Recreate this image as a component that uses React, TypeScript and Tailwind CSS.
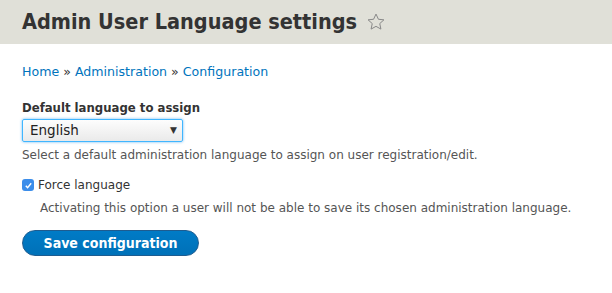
export default function App() {
  const font = { fontFamily: '"DejaVu Sans", "Liberation Sans", sans-serif' };
  const bold = { fontFamily: '"DejaVu Sans Condensed", "DejaVu Sans", sans-serif', fontStretch: "condensed" };
  return (
    <div className="w-[612px] h-[293px] bg-white text-[#333]" style={font}>
      <div className="h-[44px] bg-[#e0e0d8] flex items-center px-[22px] gap-[9px]">
        <h1 className="text-[21.5px] font-bold text-[#333] leading-none" style={bold}>
          Admin User Language settings
        </h1>
        <svg width="20" height="20" viewBox="0 0 24 24" fill="none" stroke="#888" strokeWidth="1.2">
          <path d="M12 2.5l2.9 6.2 6.6.7-5 4.5 1.4 6.6L12 17.2l-5.9 3.3 1.4-6.6-5-4.5 6.6-.7z" strokeLinejoin="round" />
        </svg>
      </div>
      <div className="px-[22px]">
        <nav className="mt-[20px] text-[12.6px] text-[#0074bd] leading-[16px]">
          Home <span className="text-[#333]">»</span> Administration <span className="text-[#333]">»</span> Configuration
        </nav>
        <div className="mt-[20px]">
          <label className="block text-[13px] font-bold leading-[16px]" style={bold}>
            Default language to assign
          </label>
          <div className="mt-[3px] w-[161px] h-[23px] border border-[#40b6ff] shadow-[0_0_3px_#6fb8f0] rounded-[2px] bg-gradient-to-b from-[#fdfdfd] to-[#eaeaea] flex items-center justify-between pl-[7px] pr-[5px]">
            <span className="text-[13.5px] text-[#222]">English</span>
            <span className="text-[9px] text-[#333]">▼</span>
          </div>
          <p className="mt-[6px] text-[12px] text-[#555] leading-[15px]">
            Select a default administration language to assign on user registration/edit.
          </p>
        </div>
        <div className="mt-[14px]">
          <div className="flex items-center gap-[4px]">
            <span className="w-[12px] h-[12px] rounded-[3px] bg-[#3b8dea] flex items-center justify-center">
              <svg width="9" height="9" viewBox="0 0 10 10" fill="none" stroke="#fff" strokeWidth="1.6">
                <path d="M2 5.2l2 2.2L8 2.5" />
              </svg>
            </span>
            <span className="text-[12px] leading-[16px]">Force language</span>
          </div>
          <p className="mt-[8px] ml-[18px] text-[12px] text-[#555] leading-[15px]">
            Activating this option a user will not be able to save its chosen administration language.
          </p>
        </div>
        <button
          className="mt-[14px] w-[177px] h-[26px] rounded-full bg-gradient-to-b from-[#007bc6] to-[#0071b8] border border-[#1e5c90] text-white text-[14px] font-bold"
          style={bold}
        >
          Save configuration
        </button>
      </div>
    </div>
  );
}
